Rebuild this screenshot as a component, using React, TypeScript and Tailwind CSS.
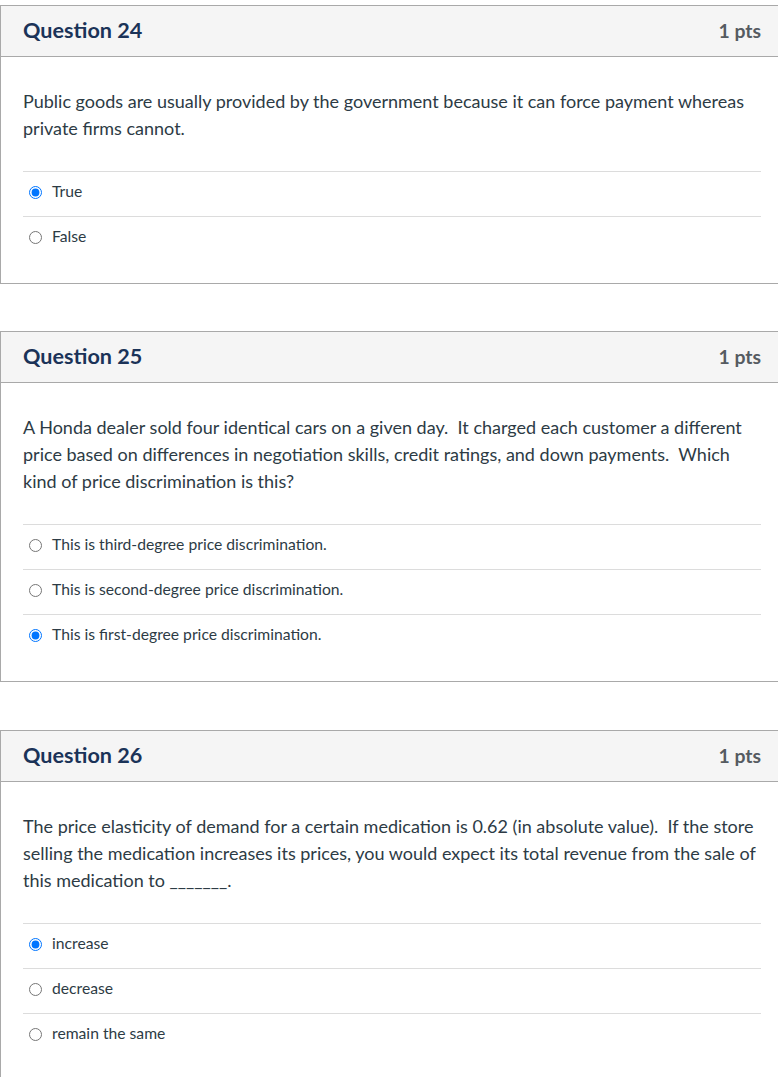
import React from "react";

type Q = {
  num: number;
  text: React.ReactNode;
  answers: string[];
  checked: number;
};

const questions: Q[] = [
  {
    num: 24,
    text: "Public goods are usually provided by the government because it can force payment whereas private firms cannot.",
    answers: ["True", "False"],
    checked: 0,
  },
  {
    num: 25,
    text: (
      <>
        A Honda dealer sold four identical cars on a given day.{"\u00a0 "}It charged each customer a different price based on differences in negotiation skills, credit ratings, and down payments.{"\u00a0 "}Which kind of price discrimination is this?
      </>
    ),
    answers: [
      "This is third-degree price discrimination.",
      "This is second-degree price discrimination.",
      "This is first-degree price discrimination.",
    ],
    checked: 2,
  },
  {
    num: 26,
    text: (
      <>
        The price elasticity of demand for a certain medication is 0.62 (in absolute value).{"\u00a0 "}If the store selling the medication increases its prices, you would expect its total revenue from the sale of this medication to _______.
      </>
    ),
    answers: ["increase", "decrease", "remain the same"],
    checked: 0,
  },
];

function Card({ q, first }: { q: Q; first: boolean }) {
  return (
    <div className={`border-l border-t border-b border-[#a9a9a9] ${first ? "mb-[47px]" : "mb-[48px]"}`}>
      <div className="h-[51px] bg-[#f5f5f5] border-b border-[#a9a9a9] flex items-center justify-between pl-[22px] pr-[17px]">
        <h2 className="text-[21.6px] font-bold text-[#1b3358] leading-none">Question {q.num}</h2>
        <div className="text-[19.4px] font-bold text-[#555b61] leading-none">1 pts</div>
      </div>
      <div className="pl-[22px] pr-[17px] pt-[31px] pb-[22px]">
        <div className="text-[18px] leading-[27px] text-[#2d3b45] mb-[29px]">{q.text}</div>
        <div>
          {q.answers.map((a, i) => (
            <label
              key={i}
              className="flex items-start border-t border-[#dcdcdc] pt-[9px] pb-[15px] pl-[6px]"
            >
              <input
                type="radio"
                name={`q${q.num}`}
                defaultChecked={i === q.checked}
                className="m-0 mt-[5px] w-[13px] h-[13px] shrink-0"
              />
              <span className="ml-[10px] text-[15.7px] leading-[20px] text-[#2d3b45]">{a}</span>
            </label>
          ))}
        </div>
      </div>
    </div>
  );
}

export default function App() {
  return (
    <div className="pt-[5px] bg-white min-h-[1077px]" style={{ fontFamily: "Lato, 'Noto Sans', sans-serif" }}>
      {questions.map((q, idx) => (
        <Card key={q.num} q={q} first={idx === 0} />
      ))}
    </div>
  );
}
